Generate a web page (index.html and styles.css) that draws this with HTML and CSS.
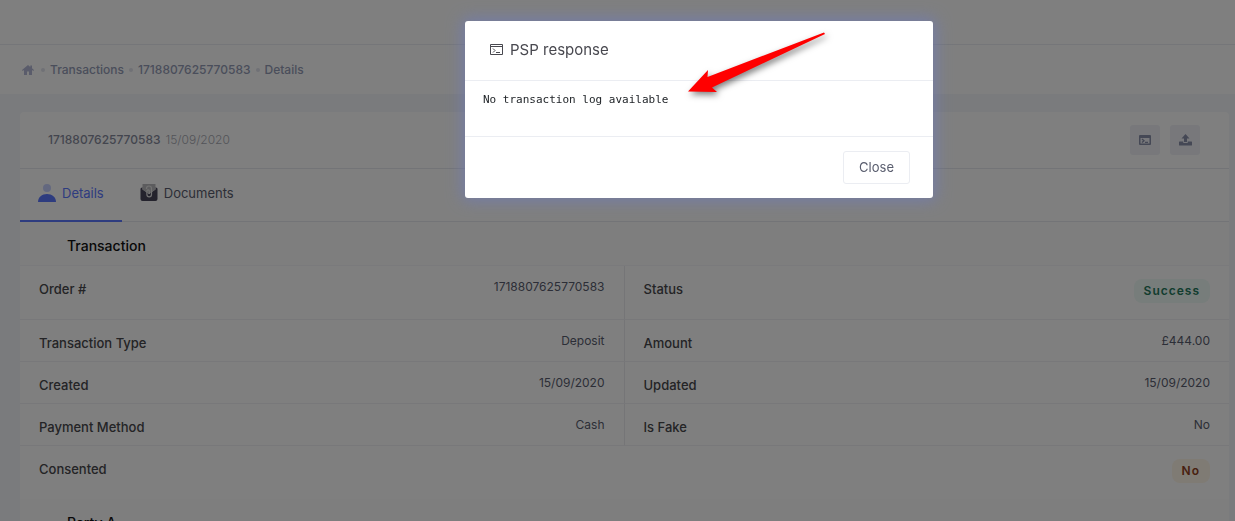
FILE: index.html
```
<!DOCTYPE html>
<html lang="en">

<head>
    <meta charset="UTF-8">
    <meta name="viewport" content="width=device-width, initial-scale=1.0">
    <title>Transaction Details</title>
    <link rel="stylesheet" href="styles.css">
</head>

<body>
    <header class="topbar"></header>

    <nav class="subheader" aria-label="Breadcrumb">
        <a href="#" class="home" aria-label="Home">
            <svg width="12" height="10" viewBox="0 0 12 10" fill="currentColor">
                <path d="M6 0 0 5l.7.9L2 5v5h3V6.500h2V10h3V5l1.300.9L12 5l-2-1.700V.500H8.300V2z" />
            </svg>
        </a>
        <span class="dot"></span>
        <a href="#">Transactions</a>
        <span class="dot"></span>
        <a href="#">1718807625770583</a>
        <span class="dot"></span>
        <a href="#">Details</a>
    </nav>

    <main class="content">
        <div class="card">
            <div class="card-head">
                <h1>1718807625770583</h1>
                <span class="date">15/09/2020</span>
                <div class="tools">
                    <button type="button" class="icon-btn" aria-label="PSP response">
                        <svg width="12" height="10" viewBox="0 0 12 10">
                            <path fill="currentColor" fill-rule="evenodd" d="M1 0h10a1 1 0 0 1 1 1v8a1 1 0 0 1-1 1H1a1 1 0 0 1-1-1V1a1 1 0 0 1 1-1zm.500 3v5.500h9V3z" />
                            <path fill="none" stroke="currentColor" stroke-width="1.300" d="M3 4l2 1.700L3 7.500M6 7.300h3" />
                        </svg>
                    </button>
                    <button type="button" class="icon-btn" aria-label="Upload">
                        <svg width="13" height="12" viewBox="0 0 13 12" fill="currentColor">
                            <path d="M6.500 0 10.500 4.500H8V8H5V4.500H2.500z" />
                            <path d="M.500 7.500H4.300V9h4.400V7.500h3.800a.5.5 0 0 1 .5.5v3a.5.5 0 0 1-.5.5H.500A.5.5 0 0 1 0 11V8a.5.5 0 0 1 .5-.5z" />
                        </svg>
                    </button>
                </div>
            </div>

            <nav class="tabs">
                <a href="#" class="tab active">
                    <svg width="18" height="18" viewBox="0 0 18 18" fill="#5d78ff">
                        <circle cx="9" cy="4" r="4" opacity=".35" />
                        <path d="M0 18c0-5 4-8 9-8s9 3 9 8z" />
                    </svg>
                    Details
                </a>
                <a href="#" class="tab">
                    <svg width="18" height="18" viewBox="0 0 18 18">
                        <path fill="#48465b" d="M.500 4.500 2.500 3v2.500L9 10l6.500-4.500V3l2 1.500V15a2 2 0 0 1-2 2h-13a2 2 0 0 1-2-2z" />
                        <path fill="#b9b9bc" d="M2.500 0h13v5.500L9 10 2.500 5.500z" />
                        <path fill="none" stroke="#e4e4e4" stroke-width="1.200" d="M6.500 5V4.500a2.500 2.500 0 0 1 5 0v6a2.300 2.300 0 0 1-4.600 0V7a1.200 1.200 0 0 1 2.400 0v3" />
                    </svg>
                    Documents
                </a>
            </nav>

            <h2>Transaction</h2>
            <table class="details">
                <tr>
                    <th scope="row">Order #</th>
                    <td class="split">1718807625770583</td>
                    <th scope="row">Status</th>
                    <td><span class="badge success">Success</span></td>
                </tr>
                <tr>
                    <th scope="row">Transaction Type</th>
                    <td class="split">Deposit</td>
                    <th scope="row">Amount</th>
                    <td>£444.00</td>
                </tr>
                <tr>
                    <th scope="row">Created</th>
                    <td class="split">15/09/2020</td>
                    <th scope="row">Updated</th>
                    <td>15/09/2020</td>
                </tr>
                <tr>
                    <th scope="row">Payment Method</th>
                    <td class="split">Cash</td>
                    <th scope="row">Is Fake</th>
                    <td>No</td>
                </tr>
                <tr>
                    <th scope="row">Consented</th>
                    <td colspan="3"><span class="badge warning">No</span></td>
                </tr>
            </table>

            <h2>Party A</h2>
        </div>
    </main>

    <div class="backdrop">
        <div class="modal" role="dialog" aria-modal="true" aria-labelledby="modalTitle">
            <div class="modal-head">
                <svg width="13" height="12" viewBox="0 0 13 12" fill="none" stroke="currentColor">
                    <path d="M.5.5h12v10H.5zM.5 2.500h12M3 4.500l2 2-2 2M6 8.500h4" />
                </svg>
                <h3 id="modalTitle">PSP response</h3>
            </div>
            <div class="modal-body">
                <pre>No transaction log available</pre>
            </div>
            <div class="modal-foot">
                <button type="button" class="close-btn">Close</button>
            </div>
            <svg class="arrow" width="150" height="76" viewBox="0 0 150 76">
                <path fill="#f00" d="M8 69.500 28 48l-.5 7L144 10.500l1 1.500L32 65.500l5 4.500z" />
            </svg>
        </div>
    </div>
</body>

</html>
```
FILE: styles.css
```
body {
    font-family: Inter, 'Open Sans', sans-serif;
    font-size: 13px;
    line-height: 20px;
    color: #646c9a;
    background-color: #f4f6fa;
    margin: 0;
    height: 100vh;
    overflow: hidden;
}

a {
    color: inherit;
    text-decoration: none;
}

h1,
h2,
h3,
pre {
    margin: 0;
}

button {
    font-family: inherit;
    cursor: pointer;
}

.topbar {
    height: 44px;
    background-color: #fff;
    border-bottom: 1px solid #ebedf2;
}

.subheader {
    display: flex;
    align-items: center;
    gap: 5px;
    height: 48px;
    padding: 1px 22px 0;
    background-color: #fff;
    color: #959cb6;
    font-size: 12px;
    font-weight: 500;
}

.home {
    display: flex;
    margin-right: 2px;
    color: #b4b9d6;
}

.dot {
    width: 4px;
    height: 4px;
    border-radius: 50%;
    background-color: #e0e2ec;
}

.content {
    padding: 18px 6px 0 20px;
}

.card {
    background-color: #fff;
    border-radius: 4px;
}

.card-head {
    display: flex;
    align-items: center;
    gap: 5px;
    height: 56px;
    padding: 0 29px 0 28px;
    border-bottom: 1px solid #e6e8ee;
}

.card-head h1 {
    color: #878b9d;
    font-size: 12px;
    font-weight: 500;
}

.date {
    color: #a7a9b2;
    font-size: 12px;
    font-weight: 300;
}

.tools {
    display: flex;
    gap: 10px;
    margin-left: auto;
}

.icon-btn {
    display: flex;
    align-items: center;
    justify-content: center;
    width: 30px;
    height: 30px;
    padding: 0;
    border: none;
    border-radius: 3px;
    background-color: #f0f1f7;
    color: #8a90ab;
}

.tabs {
    display: flex;
    border-bottom: 1px solid #e6e8ee;
}

.tab {
    display: flex;
    align-items: center;
    gap: 6px;
    padding: 14px 18px 17px;
    margin-bottom: -1px;
    border-bottom: 2px solid transparent;
    color: #595d6e;
}

.tab.active {
    color: #5d78ff;
    border-bottom-color: #5d78ff;
}

h2 {
    padding: 14px 47px 9px;
    border-bottom: 1px solid #f5f5f8;
    background-color: #fcfcfd;
    color: #111;
    font-size: 14px;
    font-weight: 500;
}

.details {
    width: 100%;
    table-layout: fixed;
    border-collapse: separate;
    border-spacing: 0;
}

.details th {
    padding: 13px 19px 8px;
    color: #48484c;
    font-size: 13px;
    font-weight: 500;
    text-align: left;
    vertical-align: top;
    border-bottom: 1px solid #f1f1f4;
}

.details td {
    padding: 11px 19px 9px;
    color: #595d6e;
    font-size: 12px;
    text-align: right;
    vertical-align: top;
    border-bottom: 1px solid #f1f1f4;
}

.details .split {
    border-right: 1px solid #ebebef;
}

.details tr:last-child th,
.details tr:last-child td {
    border-bottom: none;
}

.badge {
    display: inline-block;
    padding: 2px 10px;
    margin: 2px 0 7px;
    border-radius: 8px;
    font-weight: 600;
    letter-spacing: 1px;
}

.success {
    background-color: #eefaf6;
    color: #24785c;
}

.warning {
    background-color: #fff6e8;
    color: #8f4020;
}

.backdrop {
    position: fixed;
    inset: 0;
    padding-left: 163px;
    background-color: rgba(0, 0, 0, 0.5);
}

.modal {
    position: relative;
    width: 468px;
    max-width: 90%;
    margin: 21px auto;
    background-color: #fff;
    border-radius: 3px;
    box-shadow: 0 0 15px 3px rgba(113, 124, 180, 0.75);
}

.modal-head {
    display: flex;
    align-items: center;
    gap: 7px;
    padding: 19px 25px 20px;
    border-bottom: 1px solid #ebedf2;
    color: #48484f;
}

.modal-head h3 {
    font-size: 15px;
    font-weight: 400;
}

.modal-body {
    padding: 9px 18px 26px;
    border-bottom: 1px solid #ebedf2;
}

.modal-body pre {
    color: #212529;
    font-family: 'DejaVu Sans Mono', monospace;
    font-size: 11px;
}

.modal-foot {
    display: flex;
    justify-content: flex-end;
    padding: 14px 23px;
}

.close-btn {
    padding: 6px 15px;
    border: 1px solid #ebedf2;
    border-radius: 3px;
    background-color: #fff;
    color: #595d6e;
    font-size: 13px;
    line-height: 19px;
}

.close-btn:hover {
    background-color: #f4f5f8;
}

.arrow {
    position: absolute;
    top: 1px;
    left: 215px;
    filter: drop-shadow(2px 3px 3px rgba(0, 0, 0, 0.5));
}
```
